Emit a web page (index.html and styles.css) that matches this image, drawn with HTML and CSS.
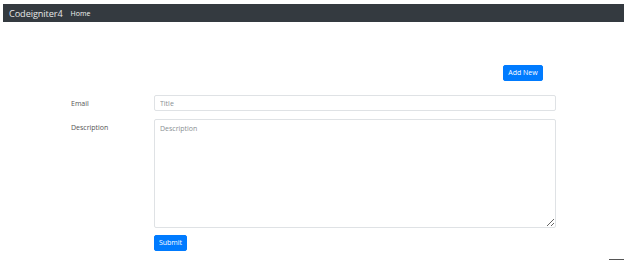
FILE: index.html
```html
<!DOCTYPE html>
<html>
<head>
<meta charset="utf-8">
<link rel="stylesheet" href="styles.css">
</head>
<body>
<div class="page">
  <nav class="navbar">
    <span class="brand">Codeigniter4</span>
    <span class="nav-link">Home</span>
  </nav>
  <main class="container">
    <div class="toolbar">
      <button class="btn">Add New</button>
    </div>
    <form class="form">
      <label class="label">Email</label>
      <input class="input" placeholder="Title">
      <label class="label label-top">Description</label>
      <textarea class="input textarea" placeholder="Description"></textarea>
      <span></span>
      <div class="actions"><button class="btn" type="button">Submit</button></div>
    </form>
  </main>
  <div class="corner-line"></div>
</div>
</body>
</html>
```
FILE: styles.css
```css
* { box-sizing: border-box; }
html, body { margin: 0; padding: 0; background: #fff; }
body { font-family: "Open Sans", "Noto Sans", sans-serif; }
.page { position: relative; width: 628px; height: 267px; padding: 4px 4px 0 3px; }
.navbar {
  height: 18px;
  background: #343a40;
  display: flex;
  align-items: center;
  padding-left: 6px;
  gap: 8px;
}
.brand { color: #e6e6e6; font-size: 9.2px; letter-spacing: -0.1px; }
.nav-link { color: #f2f2f2; font-size: 7px; }
.container { margin-left: 68px; width: 485px; }
.toolbar { display: flex; justify-content: flex-end; padding-right: 13px; margin-top: 43px; }
.btn {
  background: #007bff;
  color: #fff;
  border: 1px solid #007bff;
  border-radius: 2px;
  font-family: "Open Sans", "Noto Sans", sans-serif;
  font-size: 7px;
  height: 16px;
  padding: 0 6px;
  line-height: 14px;
  display: block;
}
.toolbar .btn { width: 40px; padding: 0; }
.form {
  margin-top: 14px;
  display: grid;
  grid-template-columns: 83px 402px;
  row-gap: 8px;
}
.label { color: #555; font-size: 7px; display: flex; align-items: center; height: 16px; }
.label-top { align-items: flex-start; padding-top: 4px; }
.input {
  height: 16px;
  border: 1px solid #dfe2e5;
  border-radius: 2px;
  font-family: "Open Sans", "Noto Sans", sans-serif;
  font-size: 7px;
  padding: 0 5px;
  color: #555;
  margin: 0;
  display: block;
}
.input::placeholder { color: #8a8f94; }
.textarea { height: 109px; padding-top: 4px; resize: vertical; }
.actions { display: flex; margin-top: -1px; }
.actions .btn { width: 33px; padding: 0; }
.corner-line {
  position: absolute;
  left: 609px;
  top: 259px;
  width: 15px;
  height: 1px;
  background: #555;
}
```
